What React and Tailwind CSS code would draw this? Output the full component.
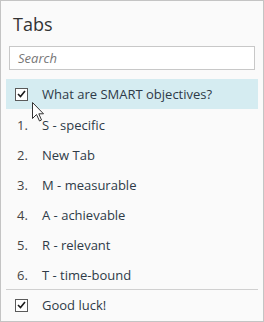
import React from "react";

const items = [
  "S - specific",
  "New Tab",
  "M - measurable",
  "A - achievable",
  "R - relevant",
  "T - time-bound",
];

function Check() {
  return (
    <span className="flex h-[13px] w-[13px] items-center justify-center border border-[#5a5a5a] bg-white">
      <svg width="9" height="8" viewBox="0 0 9 8">
        <path d="M1 4 L3.5 6.5 L8 1" fill="none" stroke="#1a1a1a" strokeWidth="1.6" />
      </svg>
    </span>
  );
}

export default function App() {
  return (
    <div
      className="relative h-[322px] w-[264px] border border-[#c4c4c4] bg-[#fafafa] text-[#2e3a48]"
      style={{ fontFamily: '"Open Sans", "Noto Sans", sans-serif' }}
    >
      <div className="pl-[12px] pt-[12px] text-[18px] leading-[22px] text-[#333]">Tabs</div>
      <div className="mx-[8px] mt-[11px] h-[24px] border border-[#c8c8c8] bg-white pl-[8px] text-[13px] italic leading-[22px] text-[#777]">
        Search
      </div>
      <div className="mx-[5px] mt-[9px]">
        <div className="flex h-[30px] items-center bg-[#d5ecf1]">
          <div className="w-[36px] pl-[9px]">
            <Check />
          </div>
          <span className="pt-[2px] text-[13px]">What are SMART objectives?</span>
        </div>
        {items.map((t, i) => (
          <div key={t} className="flex h-[30px] items-center pt-[3px]">
            <span className="w-[36px] pl-[11px] text-[13px] text-[#444]">{i + 1}.</span>
            <span className="text-[13px]">{t}</span>
          </div>
        ))}
        <div className="h-px bg-[#d0d0d0]" />
        <div className="flex h-[30px] items-center">
          <div className="w-[36px] pl-[9px]">
            <Check />
          </div>
          <span className="pt-[2px] text-[13px]">Good luck!</span>
        </div>
      </div>
      <svg className="absolute left-[31px] top-[101px]" width="13" height="20" viewBox="0 0 13 20">
        <path
          d="M0.5 0.5 L0.5 16.5 L4.5 12.5 L7.5 19 L9.5 18 L6.8 11.8 L11.5 11.8 Z"
          fill="#fff"
          stroke="#333"
          strokeWidth="1"
          strokeLinejoin="round"
        />
      </svg>
    </div>
  );
}
